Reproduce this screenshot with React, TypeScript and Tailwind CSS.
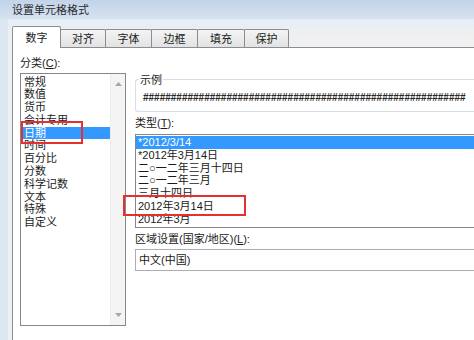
import React from "react";

const categories = [
  "常规",
  "数值",
  "货币",
  "会计专用",
  "日期",
  "时间",
  "百分比",
  "分数",
  "科学记数",
  "文本",
  "特殊",
  "自定义",
];

const types = [
  "*2012/3/14",
  "*2012年3月14日",
  "二○一二年三月十四日",
  "二○一二年三月",
  "三月十四日",
  "2012年3月14日",
  "2012年3月",
];

const tabs = [
  { label: "对齐", w: "w-[46px]" },
  { label: "字体", w: "w-[47px]" },
  { label: "边框", w: "w-[47px]" },
  { label: "填充", w: "w-[48px]" },
  { label: "保护", w: "w-[45px]" },
];

export default function App() {
  return (
    <div className="relative w-[474px] h-[340px] overflow-hidden bg-[#dbe6f2] flex flex-col font-['Liberation_Sans','Noto_Sans_CJK_SC',sans-serif] text-[11px] text-[#1a1a1a]">
      {/* title bar */}
      <div className="h-[19px] shrink-0 bg-gradient-to-b from-[#c3d4e9] to-[#d5e2f0] pl-[12px] leading-[20px] text-[11px] text-[#2a2a2a]">
        设置单元格格式
      </div>

      <div className="flex flex-1 min-h-0">
        <div className="w-[8px] shrink-0 bg-[#dce7f3]" />
        <div className="flex-1 flex flex-col bg-gradient-to-b from-[#e6edf5] to-[#f0f0f0] to-[20px] pl-[4px] pt-[7px]">
          {/* tabs */}
          <div className="flex items-end h-[22px] shrink-0 -mb-px relative z-10">
            <div className="w-[49px] h-[22px] bg-white border border-b-0 border-[#898c95] rounded-t-[2px] text-center leading-[22px] text-[11px]">
              数字
            </div>
            {tabs.map((t) => (
              <div
                key={t.label}
                className={`${t.w} h-[18px] -ml-px mb-px bg-gradient-to-b from-[#f4f4f4] to-[#e2e2e2] border border-b-0 border-[#898c95] rounded-t-[2px] text-center leading-[18px] text-[11px] text-[#222]`}
              >
                {t.label}
              </div>
            ))}
          </div>

          {/* pane */}
          <div className="flex-1 bg-white border-t border-l border-[#898c95] flex pl-[7px] gap-[9px]">
            {/* left column */}
            <div className="w-[106px] shrink-0 flex flex-col">
              <div className="mt-[8px] h-[14px] leading-[14px]">
                分类(<span className="underline">C</span>):
              </div>
              <div className="mt-[3px] h-[253px] border border-[#828790] flex">
                <div className="flex-1 pt-[1.5px]">
                  {categories.map((c) => (
                    <div
                      key={c}
                      className={`h-[12.8px] leading-[12.8px] pl-[3px] ${
                        c === "日期" ? "bg-[#3399ff] text-white" : ""
                      }`}
                    >
                      {c}
                    </div>
                  ))}
                </div>
                <div className="w-[15px] bg-[#f4f4f4] border-l border-[#ececec] flex flex-col items-center justify-between py-[8px]">
                  <svg width="7" height="4" viewBox="0 0 7 4">
                    <path d="M0 4 L3.5 0 L7 4 Z" fill="#a6a6a6" />
                  </svg>
                  <svg width="7" height="4" viewBox="0 0 7 4">
                    <path d="M0 0 L3.5 4 L7 0 Z" fill="#a6a6a6" />
                  </svg>
                </div>
              </div>
            </div>

            {/* right column */}
            <div className="flex-1 min-w-0 flex flex-col">
              <div className="relative mt-[31px] h-[33px] border border-r-0 border-[#d5dfe5] rounded-l-[3px] pl-[7px] pt-[11px]">
                <span className="absolute -top-[6px] left-[3px] bg-white px-[1px] leading-[12px]">
                  示例
                </span>
                <div className="whitespace-nowrap overflow-hidden text-[10px] leading-[14px] text-[#262626] font-bold">
                  {"#".repeat(58)}
                </div>
              </div>

              <div className="mt-[4px] h-[14px] leading-[14px]">
                类型(<span className="underline">T</span>):
              </div>
              <div className="mt-[4px] h-[94px] border border-r-0 border-[#828790] pt-[1px]">
                {types.map((t, i) => (
                  <div
                    key={t}
                    className={`h-[12.8px] leading-[12.8px] pl-[2px] whitespace-nowrap ${
                      i === 0 ? "bg-[#3399ff] text-white" : ""
                    }`}
                  >
                    {t}
                  </div>
                ))}
              </div>

              <div className="mt-[4px] h-[14px] leading-[14px]">
                区域设置(国家/地区)(<span className="underline">L</span>):
              </div>
              <div className="mt-[3px] h-[22px] border border-r-0 border-[#abadb3] pl-[3px] leading-[20px]">
                中文(中国)
              </div>
            </div>
          </div>
        </div>
      </div>

      {/* red highlight boxes */}
      <div className="absolute left-[21px] top-[121px] w-[62px] h-[23px] border-2 border-[#e53030]" />
      <div className="absolute left-[123px] top-[195px] w-[123px] h-[21px] border-2 border-[#e53030]" />
    </div>
  );
}
